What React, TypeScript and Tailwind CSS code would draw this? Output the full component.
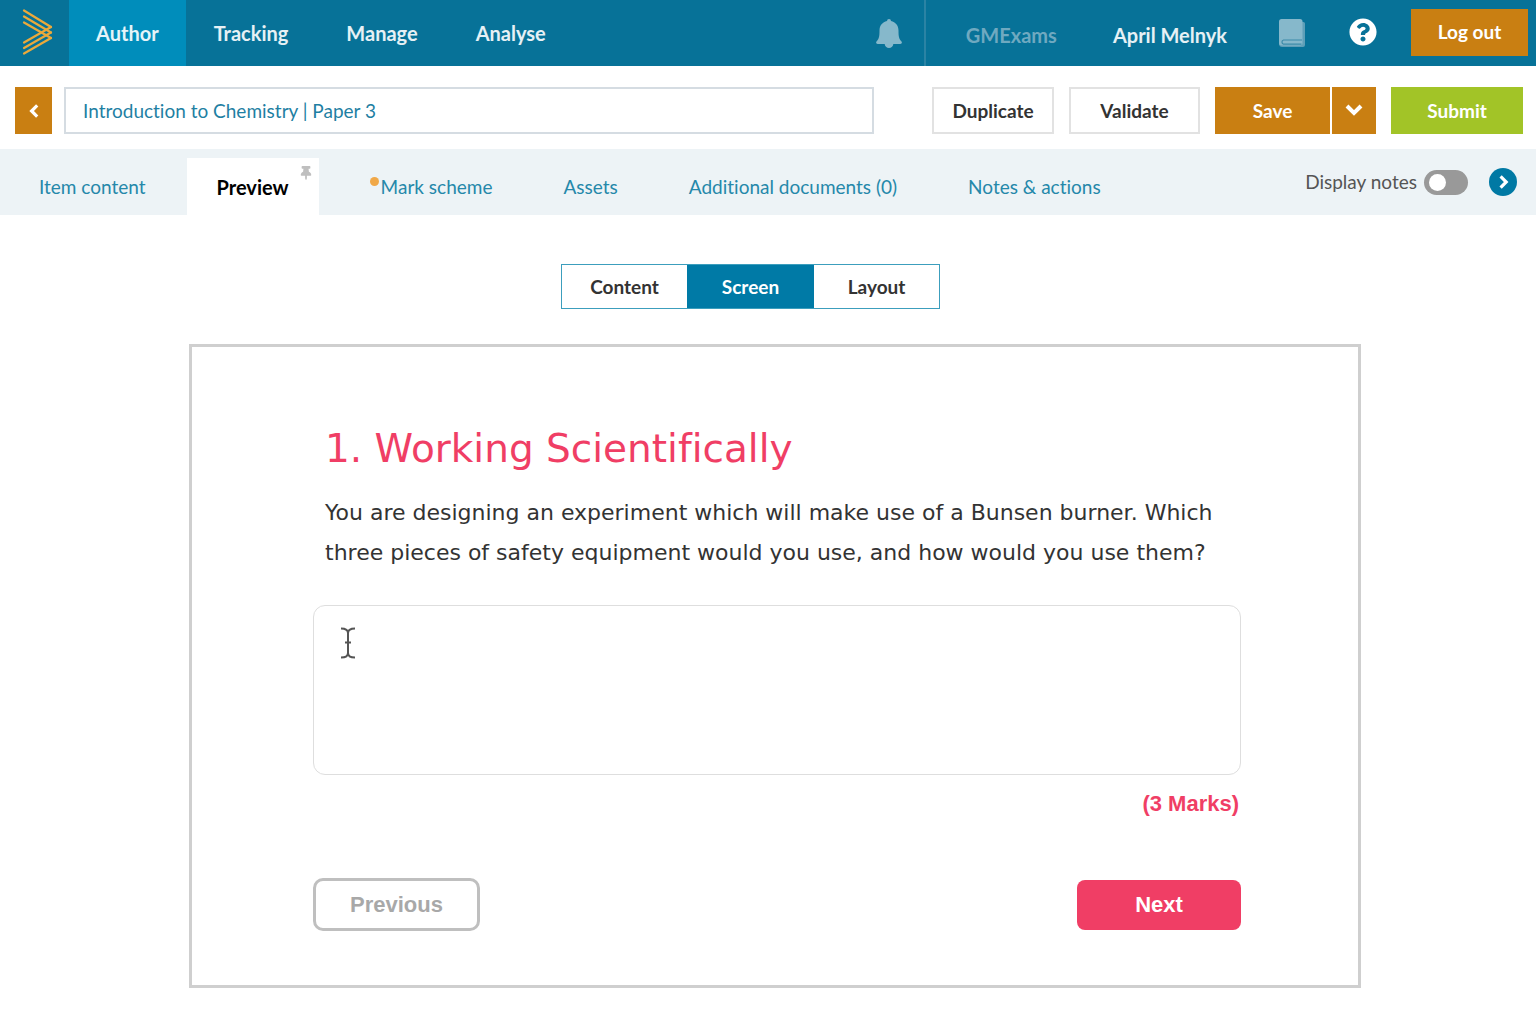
import { FaQuestionCircle, FaThumbtack } from "react-icons/fa";

function Logo() {
  return (
    <svg viewBox="0 0 34 48" className="h-12 w-[34px]" fill="none" stroke="#eba93b" strokeWidth="2.200" strokeLinecap="round" aria-hidden="true">
      <path d="M4 1.500 31 18M4 7.500 31 23.500M4 13.500 31 29" />
      <path d="M4 33.500 31 18M4 39 31 23.500M4 44.500 31 29" />
    </svg>
  );
}

function BellIcon() {
  return (
    <svg viewBox="0 0 26 29" className="h-[29px] w-[26px]" fill="currentColor" aria-hidden="true">
      <path d="M13 0a2 2 0 0 1 2 2c4.500 1 7.500 4.500 7.500 9.500 0 6 .5 8.500 3 11 .8 1 .3 2.500-1.200 2.500h-7a4.300 4 0 0 1-8.600 0h-7C.2 25-.3 23.500.5 22.500c2.500-2.500 3-5 3-11C3.500 6.500 6.500 3 11 2a2 2 0 0 1 2-2z" />
    </svg>
  );
}

function Chevron({ className, d }: { className: string; d: string }) {
  return (
    <svg viewBox="0 0 20 20" className={className} fill="none" stroke="currentColor" strokeWidth="4" aria-hidden="true">
      <path d={d} />
    </svg>
  );
}

function BookIcon() {
  return (
    <svg viewBox="0 0 28 30" className="h-[30px] w-7" aria-hidden="true">
      <path fill="#5e9fb8" d="M22 4h3.500A1.500 1.500 0 0 1 27 5.500V27a2 2 0 0 1-2 2H4.500A3.500 3.500 0 0 1 1 25.500V22h21z" />
      <rect x="1" y="1" width="23.500" height="26.500" rx="2.500" fill="#86b8cb" />
      <path fill="none" stroke="#3b8aa9" strokeWidth="1.200" d="M24 22H5.500a2.200 2.200 0 0 0 0 4.200H23.500" />
    </svg>
  );
}

function TextCursor() {
  return (
    <svg viewBox="0 0 16 32" className="h-8 w-4" fill="none" stroke="#555" strokeWidth="2" aria-hidden="true">
      <path d="M1 1.500c4 0 7 1.200 7 4.500v20c0 3.300-3 4.500-7 4.500M15 1.500c-4 0-7 1.200-7 4.500M8 26c0 3.300 3 4.500 7 4.500M5 15.500h6" />
    </svg>
  );
}

const nav = ["Tracking", "Manage", "Analyse"];

export default function App() {
  return (
    <div className="min-h-screen bg-white pb-5 font-['Lato',sans-serif] text-[19px] leading-6 text-[#333] [font-variant-ligatures:none]">
      <header className="flex h-[66px] bg-[#077298] text-xl font-bold text-white/90">
        <a href="#" aria-label="Home" className="flex w-[69px] shrink-0 items-center justify-center pl-1">
          <Logo />
        </a>
        <nav className="flex">
          <a href="#" className="flex items-center bg-[#008dbb] px-[27px]">Author</a>
          <div className="flex items-center gap-[58px] pl-7">
            {nav.map((n) => <a href="#" key={n}>{n}</a>)}
          </div>
        </nav>
        <div className="ml-auto flex items-center">
          <button aria-label="Notifications" className="mr-[22px] text-[#86b8cb]"><BellIcon /></button>
          <div className="h-full border-l-2 border-[#2b83a4]" />
          <span className="ml-10 pt-1 text-[#6fa9c0]">GMExams</span>
          <a href="#" className="ml-14 pt-1">April Melnyk</a>
          <button aria-label="Guide" className="ml-[51px]"><BookIcon /></button>
          <button aria-label="Help" className="ml-[43px] pb-0.5 text-white"><FaQuestionCircle size={28} /></button>
          <button className="mb-0.5 ml-[34px] mr-2 h-[47px] w-[117px] bg-[#c97f12] text-[19px] text-white">Log out</button>
        </div>
      </header>

      <div className="flex items-center pb-[15px] pl-[15px] pr-[13px] pt-[21px]">
        <button aria-label="Back" className="flex h-[47px] w-[37px] shrink-0 items-center justify-center bg-[#c97f12] text-white">
          <Chevron className="size-4" d="M14 3 7 10l7 7" />
        </button>
        <input aria-label="Title" defaultValue="Introduction to Chemistry | Paper 3" className="ml-3 mr-[58px] h-[47px] min-w-0 flex-1 border-2 border-[#d5dce2] px-[17px] text-[#1f7fa3] outline-none" />
        <div className="flex gap-[15px] font-bold">
          <button className="h-[47px] w-[122px] border-2 border-[#e2e2e2]">Duplicate</button>
          <button className="h-[47px] w-[131px] border-2 border-[#e2e2e2]">Validate</button>
          <div className="flex gap-0.5 text-white">
            <button className="h-[47px] w-[115px] bg-[#c97f12]">Save</button>
            <button aria-label="More save options" className="flex h-[47px] w-11 items-center justify-center bg-[#c97f12] pb-0.5">
              <Chevron className="size-5" d="m3 6 7 7 7-7" />
            </button>
          </div>
          <button className="h-[47px] w-[132px] bg-[#a2c427] text-white">Submit</button>
        </div>
      </div>

      <div className="flex h-[66px] items-end bg-[#edf3f6] text-[#2588aa]">
        <nav className="flex h-[57px] items-center">
          <a href="#" className="pl-[39px] pr-[41px]">Item content</a>
          <a href="#" className="relative flex h-full items-center bg-white px-[30px] text-xl font-bold text-black">
            Preview
            <FaThumbtack size={14} className="absolute right-1.5 top-2 text-[#bfbfbf]" />
          </a>
          <div className="flex gap-[71px] pl-[51px]">
            <a href="#" className="relative pl-[11px]">
              <span className="absolute left-0 top-0.5 size-[9px] rounded-full bg-[#f0a848]" />
              Mark scheme
            </a>
            <a href="#">Assets</a>
            <a href="#">Additional documents (0)</a>
            <a href="#">Notes &amp; actions</a>
          </div>
        </nav>
        <div className="ml-auto flex h-full items-center pr-[19px]">
          <label className="flex items-center gap-[7px] text-[#555]">
            Display notes
            <input type="checkbox" className="peer sr-only" />
            <span className="flex h-[25px] w-11 items-center rounded-full bg-[#999] px-[5px] peer-checked:justify-end">
              <span className="size-[17px] rounded-full bg-white" />
            </span>
          </label>
          <button aria-label="Next panel" className="ml-[21px] flex size-7 items-center justify-center rounded-full bg-[#0079a4] text-white">
            <Chevron className="size-4" d="m7 3 7 7-7 7" />
          </button>
        </div>
      </div>

      <main>
        <div className="mt-[49px] flex justify-center pr-[35px]">
          <div className="flex h-[45px] border border-[#3c9ebd] font-bold">
            <button className="w-[125px]">Content</button>
            <button className="w-[127px] bg-[#007aa6] text-white">Screen</button>
            <button className="w-[125px]">Layout</button>
          </div>
        </div>

        <section className="ml-[189px] mr-[175px] mt-[35px] border-3 border-[#cfcfcf] pb-[54px] pl-[121px] pr-[117px] pt-[76px]">
          <h1 className="pl-3 font-['DejaVu_Sans',sans-serif] text-[39px] leading-[52px] text-[#f03e65]">1. Working Scientifically</h1>
          <p className="mt-[18px] pl-3 font-['DejaVu_Sans',sans-serif] text-[22px] leading-10 text-[#333]">
            You are designing an experiment which will make use of a Bunsen burner. Which three pieces of safety equipment would you use, and how would you use them?
          </p>
          <div className="relative mt-8">
            <textarea aria-label="Answer" className="block h-[170px] w-full resize-none rounded-xl border border-[#dedede] px-7 py-5 outline-none" />
            <span className="pointer-events-none absolute left-[27px] top-[22px]"><TextCursor /></span>
          </div>
          <div className="mt-[17px] pr-0.5 text-right font-['Liberation_Sans',sans-serif] text-[22px] font-bold text-[#f03e65]">(3 Marks)</div>
          <div className="mt-[62px] flex items-center justify-between font-['Liberation_Sans',sans-serif] text-[22px] font-bold">
            <button className="h-[53px] w-[167px] rounded-[10px] border-3 border-[#bfbfbf] text-[#a8a8a8]">Previous</button>
            <button className="h-[50px] w-[164px] rounded-lg bg-[#f03e65] text-white">Next</button>
          </div>
        </section>
      </main>
    </div>
  );
}
